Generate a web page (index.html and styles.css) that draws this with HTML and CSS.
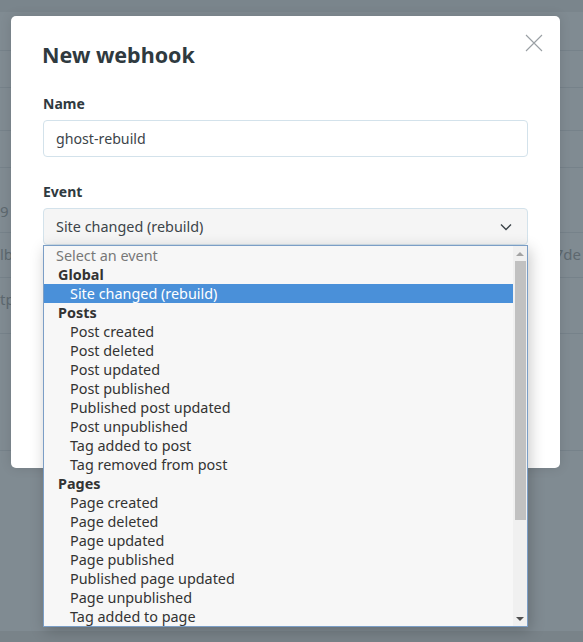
FILE: index.html
```html
<!DOCTYPE html>
<html lang="en">
<head>
    <meta charset="UTF-8">
    <meta name="viewport" content="width=device-width, initial-scale=1.0">
    <title>New webhook</title>
    <link rel="stylesheet" href="styles.css">
</head>
<body>
    <!-- Integration page behind the backdrop -->
    <div class="page">
        <div class="page-top"></div>
        <div class="row r1"></div>
        <div class="row r2"></div>
        <div class="row r3"></div>
        <div class="row r4"></div>
        <div class="row r5"><span>9</span></div>
        <div class="row r6"><span>lb</span><span>7de</span></div>
        <div class="row r7"><span>tp</span></div>
        <div class="row r8"></div>
        <div class="page-bottom"></div>
    </div>

    <div class="modal">
        <button class="close" aria-label="Close">
            <svg width="18" height="18" viewBox="0 0 18 18">
                <path d="M1 1 L17 17 M17 1 L1 17" stroke="#9aa0a4" stroke-width="1.1" fill="none"/>
            </svg>
        </button>
        <h1>New webhook</h1>

        <div class="field">
            <label>Name</label>
            <div class="input">ghost-rebuild</div>
        </div>

        <div class="field">
            <label>Event</label>
            <div class="select-wrap">
                <div class="select">
                    <span>Site changed (rebuild)</span>
                    <svg width="12" height="8" viewBox="0 0 12 8">
                        <path d="M1 1.5 L6 6.5 L11 1.5" stroke="#3c4449" stroke-width="1.4" fill="none"/>
                    </svg>
                </div>

                <!-- Open option list -->
                <div class="options">
                    <div class="option-list">
                        <div class="opt placeholder">Select an event</div>
                        <div class="group">Global</div>
                        <div class="opt selected">Site changed (rebuild)</div>
                        <div class="group">Posts</div>
                        <div class="opt">Post created</div>
                        <div class="opt">Post deleted</div>
                        <div class="opt">Post updated</div>
                        <div class="opt">Post published</div>
                        <div class="opt">Published post updated</div>
                        <div class="opt">Post unpublished</div>
                        <div class="opt">Tag added to post</div>
                        <div class="opt">Tag removed from post</div>
                        <div class="group">Pages</div>
                        <div class="opt">Page created</div>
                        <div class="opt">Page deleted</div>
                        <div class="opt">Page updated</div>
                        <div class="opt">Page published</div>
                        <div class="opt">Published page updated</div>
                        <div class="opt">Page unpublished</div>
                        <div class="opt">Tag added to page</div>
                    </div>
                    <div class="scrollbar">
                        <div class="arrow up"></div>
                        <div class="thumb"></div>
                        <div class="track"></div>
                        <div class="arrow down"></div>
                    </div>
                </div>
            </div>
        </div>
    </div>
</body>
</html>
```

FILE: styles.css
```css
body {
    margin: 0;
    font-family: "Noto Sans", "Open Sans", sans-serif;
    background-color: #808b92;
    height: 642px;
    overflow: hidden;
}

/* Page behind the backdrop */
.page {
    display: flex;
    flex-direction: column;
}
.page-top {
    height: 12px;
    background-color: #7a858c;
}
.row {
    border-bottom: 1px solid #76828a;
    display: flex;
    align-items: flex-start;
    justify-content: space-between;
    color: #5d686f;
    font-size: 15px;
    line-height: 20px;
    box-sizing: border-box;
    padding-right: 2px;
}
.r1 { height: 39px; }
.r2 { height: 37px; }
.r3 { height: 43px; }
.r4 { height: 37px; }
.r5 { height: 65px; padding-top: 33px; }
.r6 { height: 45px; padding-top: 11px; }
.r7 { height: 56px; padding-top: 11px; }
.r8 { height: 117px; }
.page-bottom {
    margin-top: 180px;
    height: 12px;
    background-color: #798389;
}

/* Modal */
.modal {
    position: absolute;
    left: 11px;
    top: 16px;
    width: 549px;
    height: 452px;
    box-sizing: border-box;
    padding: 25px 32px;
    background-color: #fff;
    border-radius: 5px;
    box-shadow: 0 0 12px rgba(0, 0, 0, 0.12);
}
.close {
    position: absolute;
    top: 18px;
    right: 17px;
    padding: 0;
    border: none;
    background: none;
    width: 18px;
    height: 18px;
}
.modal h1 {
    margin: 0 0 0 -1px;
    font-size: 21.5px;
    line-height: 28px;
    font-weight: 700;
    color: #2f3a3f;
}
.field {
    margin-top: 26px;
}
.field + .field {
    margin-top: 26px;
}
.field label {
    display: block;
    font-size: 14px;
    font-weight: 700;
    line-height: 18px;
    color: #2f3a3f;
    margin-bottom: 7px;
}
.input,
.select {
    height: 37px;
    box-sizing: border-box;
    border: 1px solid #d3e2eb;
    border-radius: 4px;
    padding: 0 12px;
    font-size: 14.2px;
    color: #3c4449;
    display: flex;
    align-items: center;
}
.select-wrap {
    position: relative;
}
.select {
    background-color: #f5f5f5;
    justify-content: space-between;
    padding-right: 15px;
    font-size: 14.4px;
}

/* Open list of options under the select */
.options {
    position: absolute;
    top: 37px;
    left: 0;
    right: 0;
    height: 382px;
    box-sizing: border-box;
    border: 1px solid #7b9ec6;
    background-color: #f7f7f7;
    display: flex;
    box-shadow: 2px 4px 14px rgba(0, 0, 0, 0.22);
    z-index: 2;
}
.option-list {
    flex: 1;
    overflow: hidden;
}
.opt,
.group {
    height: 19px;
    line-height: 19px;
    font-size: 14.4px;
    color: #333;
    white-space: nowrap;
}
.opt {
    padding-left: 26px;
}
.group {
    padding-left: 14px;
    font-weight: 700;
}
.placeholder {
    padding-left: 12px;
    color: #777;
}
.selected {
    background-color: #4a90d9;
    color: #fff;
}
.scrollbar {
    width: 14px;
    background-color: #f0f0f0;
    display: flex;
    flex-direction: column;
    align-items: center;
}
.arrow {
    width: 0;
    height: 0;
    border-left: 4px solid transparent;
    border-right: 4px solid transparent;
}
.arrow.up {
    margin: 6px 0 5px;
    border-bottom: 4px solid #a3a3a3;
}
.arrow.down {
    margin: 4px 0 5px;
    border-top: 4px solid #505050;
}
.thumb {
    width: 11px;
    height: 259px;
    background-color: #c1c1c1;
}
.track {
    flex: 1;
}
```
